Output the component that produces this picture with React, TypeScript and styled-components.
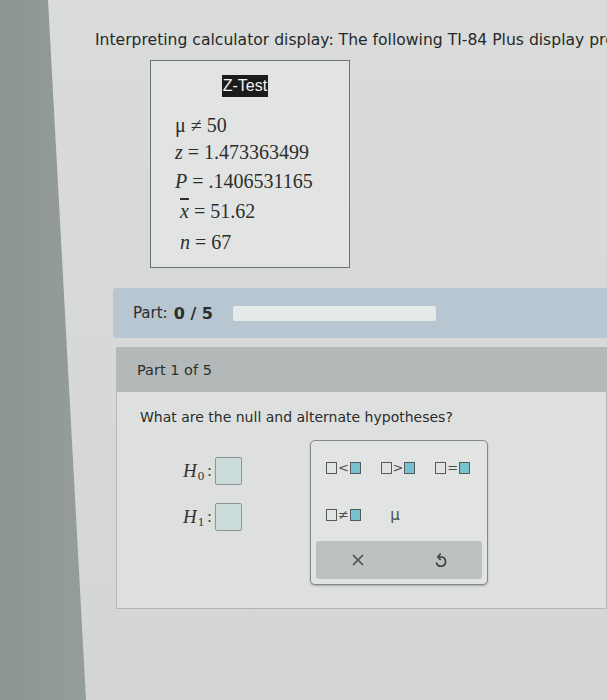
import React from 'react';
import styled, { createGlobalStyle } from 'styled-components';

const Global = createGlobalStyle`
  html, body {
    margin: 0;
    padding: 0;
    width: 607px;
    height: 700px;
    overflow: hidden;
    background: #d6d9d8;
  }
`;

const Page = styled.div`
  display: flex;
  width: 607px;
  height: 700px;
  background: linear-gradient(180deg, #d9dcdb 0%, #d3d6d5 100%);
  font-family: 'DejaVu Sans', sans-serif;
  color: #2a2c2c;
`;

const Side = styled.div`
  flex: 0 0 90px;
  background: linear-gradient(90deg, #8d9594 0%, #969e9d 100%);
  clip-path: polygon(0 0, 48px 0, 86px 100%, 0 100%);
`;

const Main = styled.div`
  flex: 1;
  min-width: 0;
  overflow: hidden;
  display: flex;
  flex-direction: column;
  padding-top: 29px;
`;

const Title = styled.div`
  padding-left: 5px;
  font-size: 15.6px;
  line-height: 22px;
  white-space: nowrap;
  color: #262828;
`;

const CalcBox = styled.div`
  margin: 9px 0 0 60px;
  width: 198px;
  height: 206px;
  border: 1px solid #6e7171;
  background: #e2e4e3;
  display: flex;
  flex-direction: column;
  align-items: center;
`;

const Highlight = styled.div`
  margin: 14px 10px 0 0;
  background: #1b1b1b;
  color: #f4f4f4;
  font-family: 'Liberation Sans', Arial, sans-serif;
  font-size: 16px;
  line-height: 22px;
  padding: 0 1px;
`;

const Lines = styled.div`
  align-self: flex-start;
  margin: 15px 0 0 24px;
  display: flex;
  flex-direction: column;
  font-family: 'Liberation Serif', 'Times New Roman', serif;
  font-size: 20px;
  color: #2c2e2e;
`;

const Line = styled.div<{ $h?: number }>`
  height: ${(p) => p.$h ?? 29}px;
  line-height: ${(p) => p.$h ?? 29}px;
  white-space: nowrap;
`;

const Ital = styled.span`
  font-style: italic;
`;

const Bar = styled.span`
  text-decoration: overline;
  font-style: italic;
`;

const PartBar = styled.div`
  margin: 20px 0 0 23px;
  height: 50px;
  background: #b7c6d1;
  border-radius: 4px 0 0 4px;
  display: flex;
  align-items: center;
  padding-left: 20px;
  font-size: 15px;
  color: #2b2d2e;
`;

const Bold = styled.b`
  margin-left: 6px;
  font-weight: bold;
  font-size: 16px;
`;

const Progress = styled.div`
  margin-left: 20px;
  width: 203px;
  height: 15px;
  background: #e7eaeb;
  border-radius: 2px;
`;

const Panel = styled.div`
  margin: 9px 0 0 26px;
  display: flex;
  flex-direction: column;
`;

const PanelHead = styled.div`
  height: 45px;
  background: #b3b9b8;
  display: flex;
  align-items: center;
  padding-left: 21px;
  font-size: 14.5px;
  color: #2d2f2f;
`;

const PanelBody = styled.div`
  height: 217px;
  border: 1px solid #b4b7b6;
  border-top: none;
  background: #dee0df;
  padding: 17px 0 0 23px;
  box-sizing: border-box;
`;

const Question = styled.div`
  font-size: 14px;
  line-height: 17px;
  color: #2a2c2c;
`;

const Work = styled.div`
  display: flex;
  margin-top: 14px;
`;

const Hyps = styled.div`
  display: flex;
  flex-direction: column;
  gap: 18px;
  margin: 17px 0 0 43px;
  width: 127px;
`;

const HypRow = styled.div`
  display: flex;
  align-items: center;
  font-family: 'Liberation Serif', 'Times New Roman', serif;
  font-style: italic;
  font-size: 19px;
  color: #333;
`;

const Sub = styled.span`
  font-style: normal;
  font-size: 13px;
  position: relative;
  top: 5px;
  margin-left: 1px;
`;

const Colon = styled.span`
  font-style: normal;
  font-size: 16px;
  margin: 0 3px 0 3px;
`;

const AnswerBox = styled.div`
  width: 25px;
  height: 26px;
  border: 1px solid #8d9595;
  border-radius: 2px;
  background: #cbdcdb;
`;

const Keypad = styled.div`
  width: 178px;
  height: 145px;
  border: 1px solid #858888;
  border-radius: 5px;
  background: #e2e4e3;
  box-shadow: 0 1px 2px rgba(0, 0, 0, 0.25);
  display: flex;
  flex-direction: column;
  padding: 3px 5px 5px;
  box-sizing: border-box;
`;

const KeyGrid = styled.div`
  display: grid;
  grid-template-columns: repeat(3, 1fr);
  grid-auto-rows: 47px;
  padding-right: 2px;
`;

const Key = styled.div`
  display: flex;
  align-items: center;
  justify-content: center;
  font-family: 'DejaVu Sans', sans-serif;
  font-size: 14px;
  color: #4a4d4d;
`;

const Sq = styled.span<{ $filled?: boolean }>`
  display: inline-block;
  width: 9px;
  height: 10px;
  border: 1.5px solid #575a5a;
  background: ${(p) => (p.$filled ? '#78c2cf' : 'transparent')};
`;

const Op = styled.span`
  margin: 0 1px;
  font-size: 13px;
`;

const Mu = styled.span`
  font-size: 15px;
  margin-right: 6px;
`;

const Actions = styled.div`
  margin-top: 3px;
  height: 40px;
  background: #bdc1c0;
  border-radius: 3px;
  display: flex;
  align-items: center;
  justify-content: space-around;
`;

const ActionBtn = styled.div`
  width: 40px;
  display: flex;
  justify-content: center;
  color: #4b4e4e;
`;

const Slot = ({ op }: { op: string }) => (
  <Key>
    <Sq />
    <Op>{op}</Op>
    <Sq $filled />
  </Key>
);

export default function App() {
  return (
    <Page>
      <Global />
      <Side />
      <Main>
        <Title>Interpreting calculator display: The following TI-84 Plus display presents</Title>

        <CalcBox>
          <Highlight>Z-Test</Highlight>
          <Lines>
            <Line $h={26}>μ ≠ 50</Line>
            <Line>
              <Ital>z</Ital> = 1.473363499
            </Line>
            <Line>
              <Ital>P</Ital> = .1406531165
            </Line>
            <Line $h={31}>
              &nbsp;<Bar>x</Bar> = 51.62
            </Line>
            <Line $h={31}>
              &nbsp;<Ital>n</Ital> = 67
            </Line>
          </Lines>
        </CalcBox>

        <PartBar>
          Part:<Bold>0 / 5</Bold>
          <Progress />
        </PartBar>

        <Panel>
          <PanelHead>Part 1 of 5</PanelHead>
          <PanelBody>
            <Question>What are the null and alternate hypotheses?</Question>
            <Work>
              <Hyps>
                <HypRow>
                  H<Sub>0</Sub>
                  <Colon>:</Colon>
                  <AnswerBox />
                </HypRow>
                <HypRow>
                  H<Sub>1</Sub>
                  <Colon>:</Colon>
                  <AnswerBox />
                </HypRow>
              </Hyps>
              <Keypad>
                <KeyGrid>
                  <Slot op="<" />
                  <Slot op=">" />
                  <Slot op="=" />
                  <Slot op="≠" />
                  <Key>
                    <Mu>μ</Mu>
                  </Key>
                </KeyGrid>
                <Actions>
                  <ActionBtn>
                    <svg width="14" height="14" viewBox="0 0 14 14">
                      <path d="M2 2 L12 12 M12 2 L2 12" stroke="#4b4e4e" strokeWidth="1.6" fill="none" />
                    </svg>
                  </ActionBtn>
                  <ActionBtn>
                    <svg width="14" height="16" viewBox="0 0 14 16">
                      <path
                        d="M4.4 5 H7 A4.6 4.6 0 1 1 2.6 11.2"
                        stroke="#3f4242"
                        strokeWidth="1.7"
                        fill="none"
                        strokeLinecap="round"
                      />
                      <path
                        d="M6.2 2.2 L3.8 5 L6.2 7.4"
                        stroke="#3f4242"
                        strokeWidth="1.7"
                        fill="none"
                        strokeLinecap="round"
                        strokeLinejoin="round"
                      />
                    </svg>
                  </ActionBtn>
                </Actions>
              </Keypad>
            </Work>
          </PanelBody>
        </Panel>
      </Main>
    </Page>
  );
}
